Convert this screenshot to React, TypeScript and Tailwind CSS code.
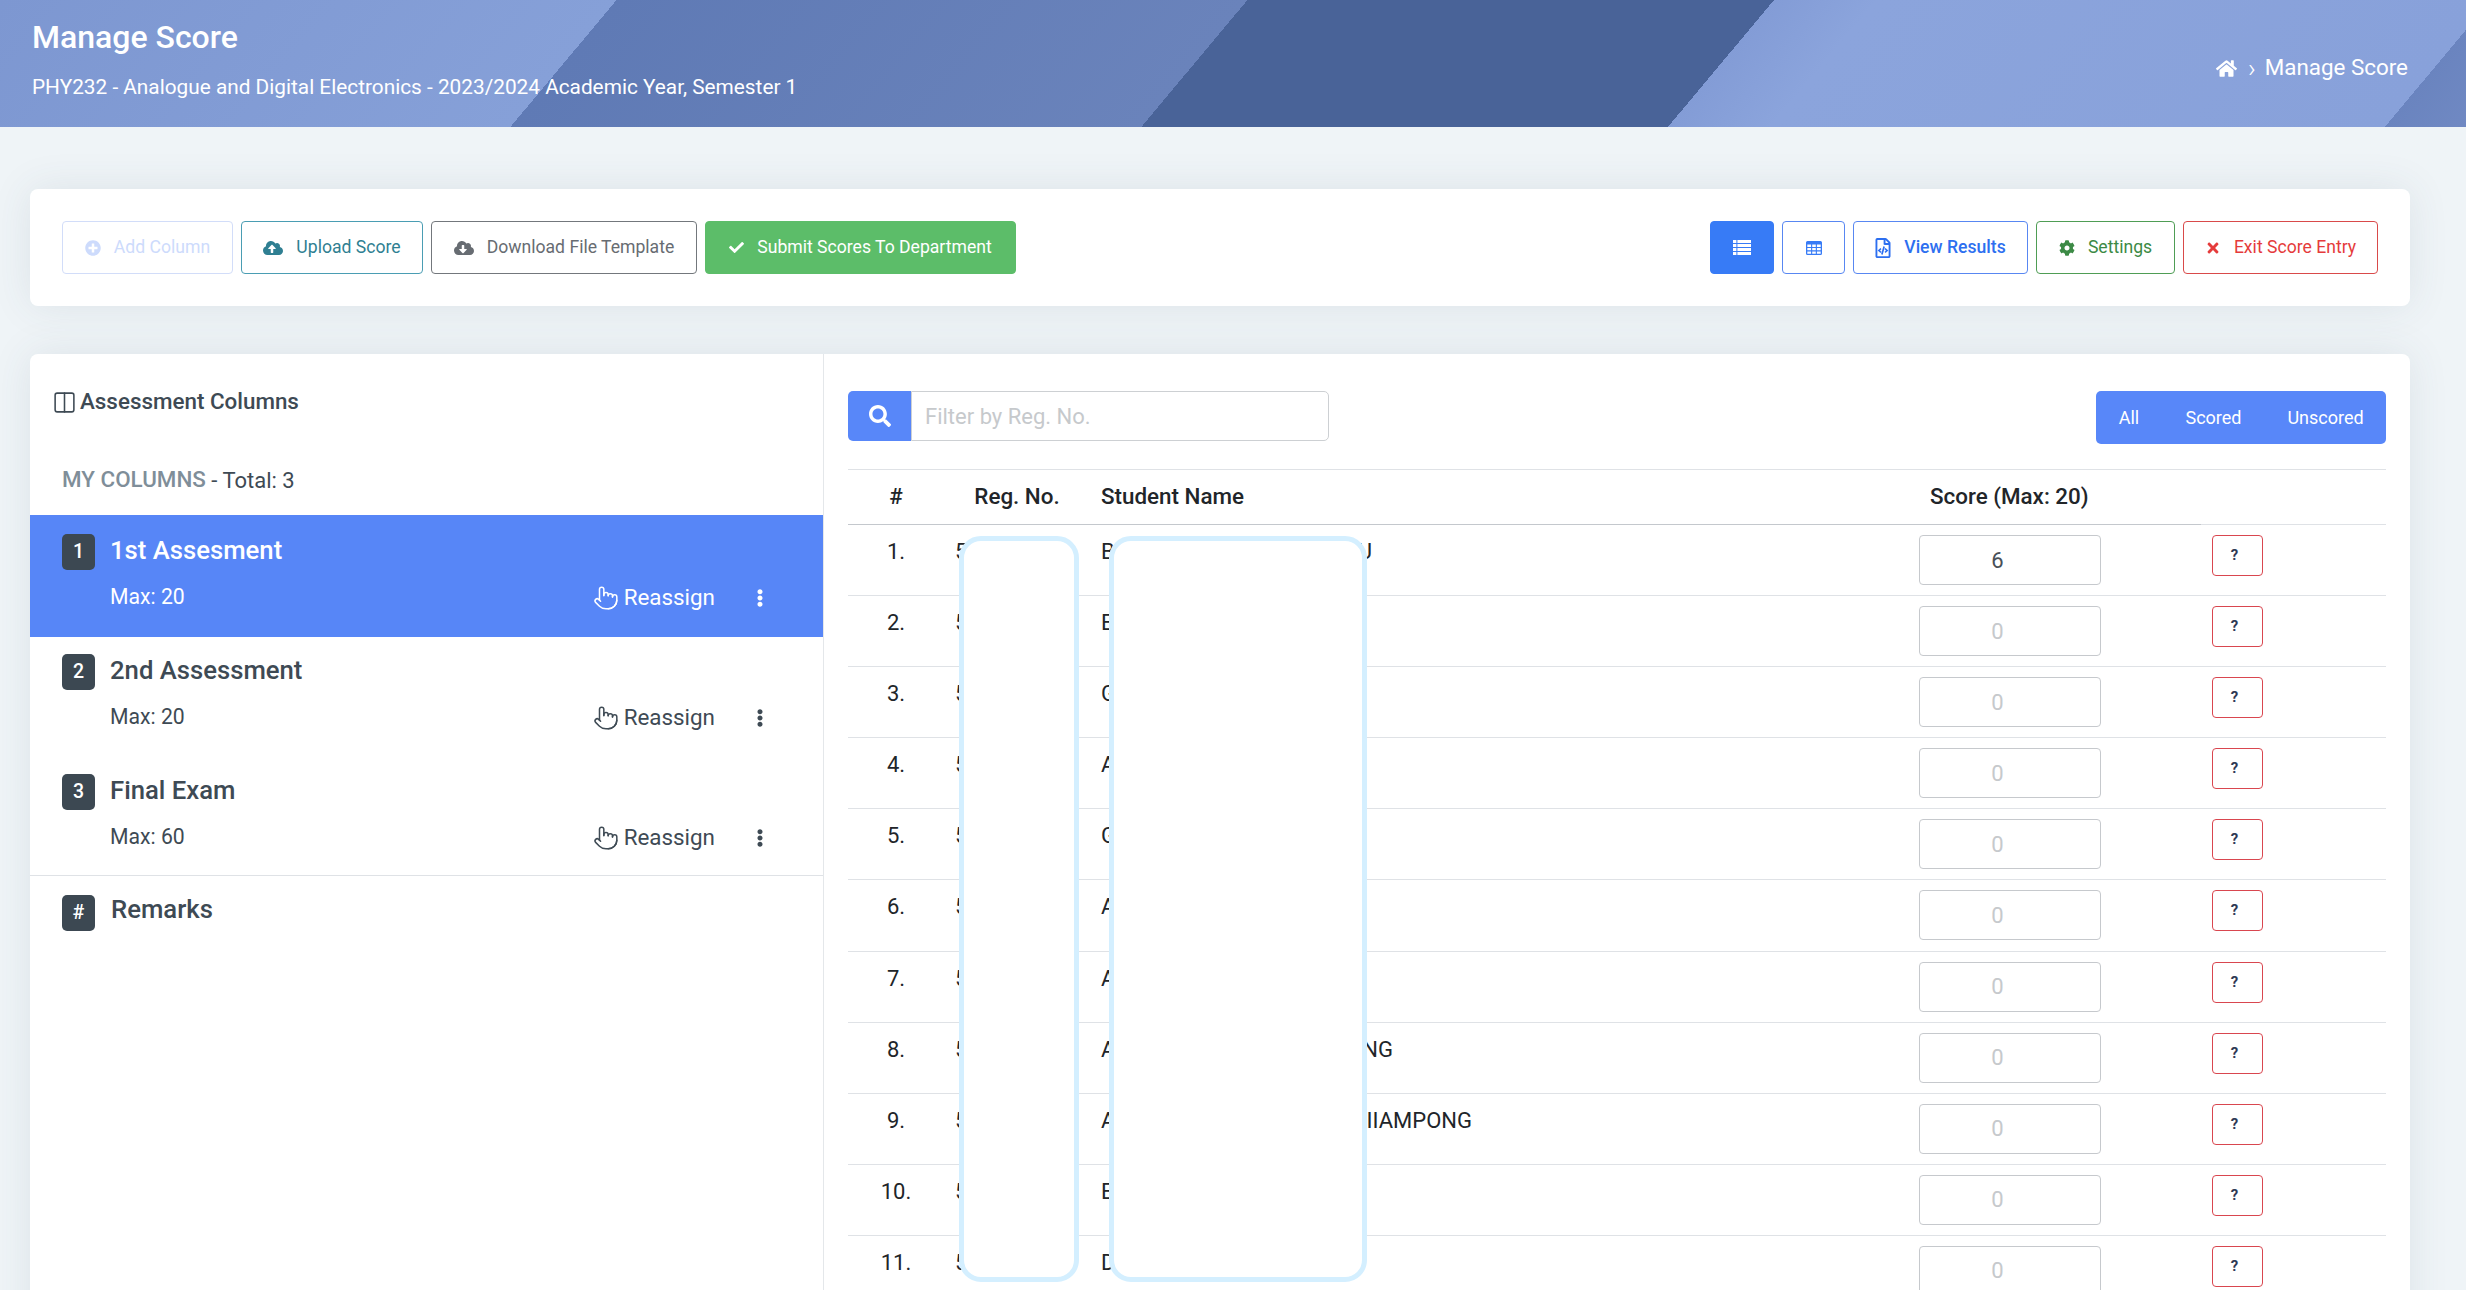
import type { ReactNode } from "react";
import { Columns2, Pointer } from "lucide-react";
import {
	FaCheck,
	FaCloudDownloadAlt,
	FaCloudUploadAlt,
	FaCog,
	FaEllipsisV,
	FaHome,
	FaPlusCircle,
	FaRegFileCode,
	FaSearch,
	FaTimes,
} from "react-icons/fa";

const assessments = [
	{ badge: "1", title: "1st Assesment", max: 20, active: true },
	{ badge: "2", title: "2nd Assessment", max: 20, active: false },
	{ badge: "3", title: "Final Exam", max: 60, active: false },
];

const students = [
	{ first: "B", tail: "U", nameWidth: "w-[271px]", score: "6" },
	{ first: "E", tail: "", nameWidth: "w-[40px]", score: "" },
	{ first: "G", tail: "", nameWidth: "w-[40px]", score: "" },
	{ first: "A", tail: "", nameWidth: "w-[40px]", score: "" },
	{ first: "G", tail: "", nameWidth: "w-[40px]", score: "" },
	{ first: "A", tail: "", nameWidth: "w-[40px]", score: "" },
	{ first: "A", tail: "", nameWidth: "w-[40px]", score: "" },
	{ first: "A", tail: "NG", nameWidth: "w-[292px]", score: "" },
	{ first: "A", tail: "IIAMPONG", nameWidth: "w-[371px]", score: "" },
	{ first: "E", tail: "", nameWidth: "w-[40px]", score: "" },
	{ first: "D", tail: "", nameWidth: "w-[40px]", score: "" },
];

export default function App() {
	return (
		<div className="h-[1290px] w-[2466px] overflow-hidden bg-[#eff4f7] font-['Roboto',sans-serif] text-[22px] text-[#3e4a54]">
			<header className="flex h-[127px] justify-between bg-[linear-gradient(129.9deg,#7d97d1_0px,#86a0d8_473px,#5f7ab5_473px,#6a83bb_957px,#496398_957px,#496398_1361px,#839cd6_1361px,#8ba4dc_1440px,#88a1da_1911px,#6a84bf_1911px,#7089c3_1975px)] pl-[32px] pr-[58px] text-white">
				<div>
					<h1 className="mt-[15px] text-[32px] font-medium leading-[44px]">Manage Score</h1>
					<p className="mt-[13px] text-[20.8px] leading-[30px]">
						PHY232 - Analogue and Digital Electronics - 2023/2024 Academic Year, Semester 1
					</p>
				</div>
				<div className="mt-[51px] flex h-[34px] items-center">
					<FaHome className="mr-[11px] h-[21px] w-[21px]" />
					<span className="mr-[9px] text-[26px] font-light leading-none">›</span>
					<span className="text-[22.4px]">Manage Score</span>
				</div>
			</header>

			<main className="flex flex-col gap-[48px] pl-[30px] pr-[56px] pt-[62px]">
				<section className="flex h-[117px] items-center justify-between rounded-[8px] bg-white px-[32px] shadow-[0_0_40px_rgba(60,80,100,0.1)]">
					<div className="flex gap-[8px]">
						<ActionButton className="w-[171px] border-[#d2ddf9] text-[#cddbfc]" icon={<FaPlusCircle className="h-[16px] w-[16px]" />} label="Add Column" />
						<ActionButton className="w-[182px] border-[#4a9db3] text-[#2f7f92]" icon={<FaCloudUploadAlt className="h-[20px] w-[20px]" />} label="Upload Score" />
						<ActionButton className="w-[266px] border-[#73777c] text-[#676c72]" icon={<FaCloudDownloadAlt className="h-[20px] w-[20px]" />} label="Download File Template" />
						<ActionButton className="w-[311px] border-[#5cbd69] bg-[#5cbd69] text-white" icon={<FaCheck className="h-[15px] w-[15px]" />} label="Submit Scores To Department" />
					</div>
					<div className="flex gap-[8px]">
						<ActionButton className="w-[64px] border-[#377bf6] bg-[#377bf6] text-white" icon={<ListIcon />} />
						<ActionButton className="w-[63px] border-[#5887f2] text-[#377bf6]" icon={<TableIcon />} />
						<ActionButton className="w-[175px] border-[#5887f2] font-medium text-[#2d6ff0]" icon={<FaRegFileCode className="h-[20px] w-[16px]" />} label="View Results" />
						<ActionButton className="w-[139px] border-[#4f9d55] text-[#3c8a45]" icon={<FaCog className="h-[16px] w-[16px]" />} label="Settings" />
						<ActionButton className="w-[195px] border-[#d94a4a] text-[#e53b3b]" icon={<FaTimes className="h-[16px] w-[16px]" />} label="Exit Score Entry" />
					</div>
				</section>

				<section className="flex h-[1000px] rounded-[8px] bg-white shadow-[0_0_40px_rgba(60,80,100,0.1)]">
					<aside className="w-[794px] shrink-0 border-r border-[#e4e7ea]">
						<div className="flex h-[96px] items-center pl-[22px]">
							<Columns2 className="mr-[3px] h-[25px] w-[25px]" strokeWidth={1.5} />
							<h2 className="text-[22.4px] font-medium">Assessment Columns</h2>
						</div>
						<p className="flex h-[65px] items-center pb-[5px] pl-[32px]">
							<span className="text-[22.4px] font-medium text-[#7f8e99]">MY COLUMNS</span>
							<span className="whitespace-pre"> - Total: 3</span>
						</p>
						{assessments.map((item) => (
							<AssessmentRow key={item.badge} {...item} />
						))}
						<div className="flex border-t border-[#dfe2e6] pl-[32px] pt-[19px]">
							<Badge>#</Badge>
							<h3 className="ml-[16px] mt-[-4px] text-[25.7px] font-medium leading-[36px]">Remarks</h3>
						</div>
					</aside>

					<div className="relative flex-1 px-[24px] pt-[37px] text-[#212529]">
						<div className="flex h-[78px] items-start justify-between">
							<div className="flex h-[50px] w-[481px]">
								<span className="flex w-[63px] items-center justify-center rounded-l-[5px] bg-[#5887f9] text-white">
									<FaSearch className="h-[22px] w-[22px]" />
								</span>
								<input
									placeholder="Filter by Reg. No."
									className="min-w-0 flex-1 rounded-r-[5px] border border-[#cdd0d3] px-[13px] text-[22px] outline-none placeholder:text-[#c6c9cc]"
								/>
							</div>
							<div className="flex h-[53px] items-center rounded-[5px] bg-[#5887f9] text-[18px] text-white">
								<span className="flex w-[66px] justify-center">All</span>
								<span className="flex w-[103px] justify-center">Scored</span>
								<span className="flex w-[121px] justify-center">Unscored</span>
							</div>
						</div>

						<div className="grid h-[56px] grid-cols-[96px_146px_818px_293px_1fr] items-center border-t border-[#dfe2e6] text-[22.4px] font-medium">
							<HeaderCell className="justify-center">#</HeaderCell>
							<HeaderCell className="justify-center">Reg. No.</HeaderCell>
							<HeaderCell className="pl-[11px]">Student Name</HeaderCell>
							<HeaderCell className="pl-[22px]">Score (Max: 20)</HeaderCell>
							<div className="h-full border-b border-[#dfe2e6]" />
						</div>

						{students.map((student, index) => (
							<StudentRow key={index} index={index + 1} {...student} />
						))}

						<div className="absolute left-[135px] top-[182px] h-[746px] w-[120px] rounded-[22px] border-[5px] border-[#d4efff] bg-white" />
						<div className="absolute left-[285px] top-[182px] h-[746px] w-[258px] rounded-[22px] border-[5px] border-[#d4efff] bg-white" />
					</div>
				</section>
			</main>
		</div>
	);
}

function ListIcon() {
	return (
		<svg viewBox="0 0 18 15" className="h-[15px] w-[18px]" fill="currentColor">
			{[0, 4, 8, 12].map((y) => (
				<g key={y}>
					<rect x="0" y={y} width="3.4" height="3" />
					<rect x="4.4" y={y} width="13.6" height="3" />
				</g>
			))}
		</svg>
	);
}

function TableIcon() {
	return (
		<svg viewBox="0 0 16 14" className="h-[14px] w-[16px]" fill="currentColor" fillRule="evenodd">
			<path d="M1.5 0h13A1.5 1.5 0 0 1 16 1.5v11a1.5 1.5 0 0 1-1.5 1.500h-13A1.500 1.500 0 0 1 0 12.500v-11A1.500 1.500 0 0 1 1.500 0zM1.300 3.600v2.300h3.800V3.600zM6.200 3.600v2.300h3.600V3.600zM10.900 3.600v2.300h3.800V3.600zM1.300 7v2.300h3.800V7zM6.200 7v2.300h3.600V7zM10.900 7v2.300h3.800V7zM1.300 10.400v2.300h3.800v-2.300zM6.200 10.400v2.300h3.600v-2.300zM10.900 10.400v2.300h3.800v-2.300z" />
		</svg>
	);
}

function ActionButton({ className, icon, label }: { className: string; icon: ReactNode; label?: string }) {
	return (
		<button className={`flex h-[53px] items-center justify-center gap-[13px] rounded-[4px] border text-[17.6px] ${className}`}>
			{icon}
			{label}
		</button>
	);
}

function Badge({ children }: { children: ReactNode }) {
	return (
		<span className="flex h-[36px] w-[33px] shrink-0 items-center justify-center rounded-[5px] bg-[#3c4852] text-[19.5px] font-medium text-white">
			{children}
		</span>
	);
}

function AssessmentRow({ badge, title, max, active }: { badge: string; title: string; max: number; active: boolean }) {
	const colors = active ? "mb-[-2px] h-[122px] bg-[#5786f7] text-white" : "h-[120px] text-[#3e4a54]";
	return (
		<div className={`pl-[32px] pr-[56px] pt-[19px] ${colors}`}>
			<div className="flex">
				<Badge>{badge}</Badge>
				<h3 className="ml-[15px] mt-[-2px] text-[25.7px] font-medium leading-[36px]">{title}</h3>
			</div>
			<div className="ml-[48px] mt-[9px] flex items-center justify-between">
				<span className="text-[21.2px] leading-[33px]">Max: {max}</span>
				<div className="mt-[2px] flex items-center">
					<Pointer className="mr-[5px] h-[26px] w-[26px]" strokeWidth={1.4} />
					<span className="text-[22.4px]">Reassign</span>
					<FaEllipsisV className="ml-[38px] h-[18px] w-[14px]" />
				</div>
			</div>
		</div>
	);
}

function HeaderCell({ className, children }: { className: string; children: ReactNode }) {
	return <div className={`flex h-full items-center border-b border-[#c4c8cd] ${className}`}>{children}</div>;
}

function StudentRow({ index, first, tail, nameWidth, score }: { index: number; first: string; tail: string; nameWidth: string; score: string }) {
	return (
		<div className="grid h-[71.1px] grid-cols-[96px_146px_818px_293px_1fr] border-b border-[#dfe2e6] pt-[10px] text-[22px] leading-[33px]">
			<div className="text-center">{index}.</div>
			<div className="pl-[11px]">5</div>
			<div className="pl-[11px]">
				<div className={`flex justify-between ${nameWidth}`}>
					<span>{first}</span>
					<span>{tail}</span>
				</div>
			</div>
			<div className="pl-[11px]">
				<input
					readOnly
					value={score}
					placeholder="0"
					className="h-[50px] w-[182px] rounded-[4px] border border-[#c6c9cd] pr-[25px] text-center text-[22px] text-[#495057] outline-none placeholder:text-[#c6c9cc]"
				/>
			</div>
			<div className="pl-[11px]">
				<button className="flex h-[41px] w-[51px] items-center justify-center rounded-[4px] border border-[#d9464f] pr-[6px] text-[15px] font-bold text-[#2e3a55]">
					?
				</button>
			</div>
		</div>
	);
}
